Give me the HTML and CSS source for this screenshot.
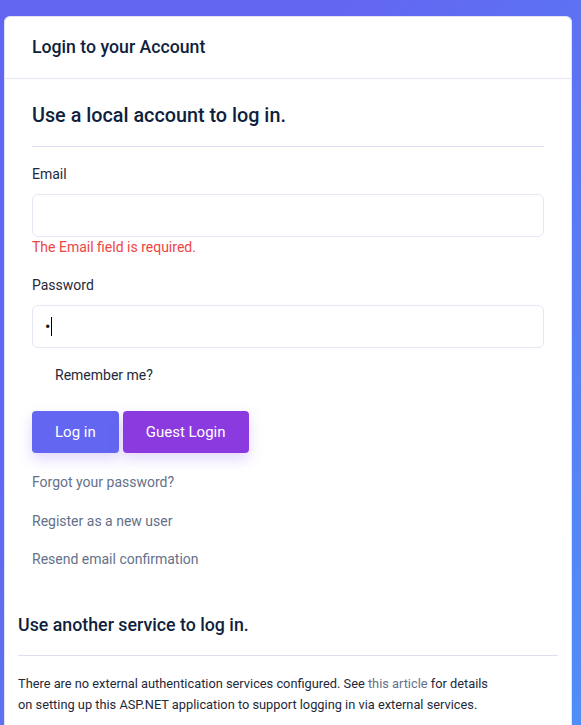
FILE: index.html
```html
<html>
  <head>
    <title>Log in</title>
    <meta name="viewport" content="width=device-width, initial-scale=1">
    <link rel="stylesheet" href="styles.css">
  </head>
  <body>
    <div class="card">
      <div class="card-header">Login to your Account</div>
      <div class="card-body">
        <section class="local">
          <h2>Use a local account to log in.</h2>
          <hr>
          <form>
            <div class="field">
              <label for="email">Email</label>
              <input id="email" type="email">
              <span class="error">The Email field is required.</span>
            </div>
            <div class="field">
              <label for="password">Password</label>
              <div class="input filled"><span class="dot">&bull;</span><span class="caret"></span></div>
            </div>
            <div class="check">
              <label>Remember me?</label>
            </div>
            <div class="actions">
              <button type="button" class="btn primary">Log in</button>
              <button type="button" class="btn guest">Guest Login</button>
            </div>
            <div class="links">
              <a href="#">Forgot your password?</a>
              <a href="#">Register as a new user</a>
              <a href="#">Resend email confirmation</a>
            </div>
          </form>
        </section>
        <section class="external">
          <h3>Use another service to log in.</h3>
          <hr>
          <p>There are no external authentication services configured. See <a href="#">this article</a> for details on setting up this ASP.NET application to support logging in via external services.</p>
        </section>
      </div>
    </div>
  </body>
</html>
```
FILE: styles.css
```css
* { box-sizing: border-box; }

body {
  margin: 0;
  padding: 16px 9px 0 4px;
  min-height: 100vh;
  font-family: Roboto, "Liberation Sans", sans-serif;
  color: #1e293b;
  background: linear-gradient(to bottom right, #6366f1 30%, #4f8ef8);
}

.card {
  background: #fff;
  border: 1px solid #e0e3f5;
  border-bottom: none;
  border-radius: 6px 6px 0 0;
}

.card-header {
  padding: 18px 27px 18px;
  font-size: 17.7px;
  font-weight: 500;
  line-height: 25px;
  color: #0f1f3d;
  border-bottom: 1px solid #e5e7f3;
}

h2, h3 {
  margin: 0;
  font-weight: 500;
  line-height: 26px;
  color: #0f1f3d;
}

h2 {
  font-size: 19.8px;
}

h3 {
  font-size: 17.8px;
}

hr {
  margin: 0;
  border: none;
  border-top: 1px solid #dcdff0;
}

.local {
  padding: 24px 27px 0;
}

.local hr {
  margin-top: 17px;
}

form {
  padding-top: 18px;
}

.field label {
  display: block;
  font-size: 14px;
  line-height: 18px;
  margin-bottom: 11px;
}

.field input, .field .input {
  display: block;
  width: 100%;
  height: 43px;
  border: 1px solid #e6e7f4;
  border-radius: 6px;
  background: #fff;
  font: inherit;
}

.field .input {
  display: flex;
  align-items: center;
  padding-left: 12px;
}

.dot {
  font-size: 16px;
  color: #111;
}

.caret {
  width: 1px;
  height: 19px;
  background: #000;
  margin-left: 1px;
}

.error {
  display: block;
  margin-top: 1px;
  font-size: 14px;
  line-height: 18px;
  color: #ef4444;
  margin-bottom: 20px;
}

.check {
  padding: 18px 0 0 23px;
  font-size: 14px;
  line-height: 18px;
}

.actions {
  display: flex;
  gap: 4px;
  margin-top: 27px;
}

.btn {
  height: 42px;
  border: none;
  border-radius: 4px;
  color: #fff;
  font: inherit;
  font-size: 15px;
  padding: 0 23px;
  box-shadow: 0 6px 14px rgba(139, 92, 246, 0.25);
}

.primary {
  background: #6366f1;
}

.guest {
  background: #8b3ae0;
}

.links {
  display: flex;
  flex-direction: column;
  gap: 20.5px;
  padding-top: 20px;
}

.links a {
  font-size: 14px;
  line-height: 18px;
  color: #64718a;
  text-decoration: none;
}

.external {
  padding: 28px 13px 20px;
}

.external hr {
  margin-top: 17px;
}

.external p {
  max-width: 480px;
  margin: 17px 0 0;
  font-size: 12.8px;
  line-height: 21px;
}

.external a {
  color: #64718a;
  text-decoration: none;
}
```
